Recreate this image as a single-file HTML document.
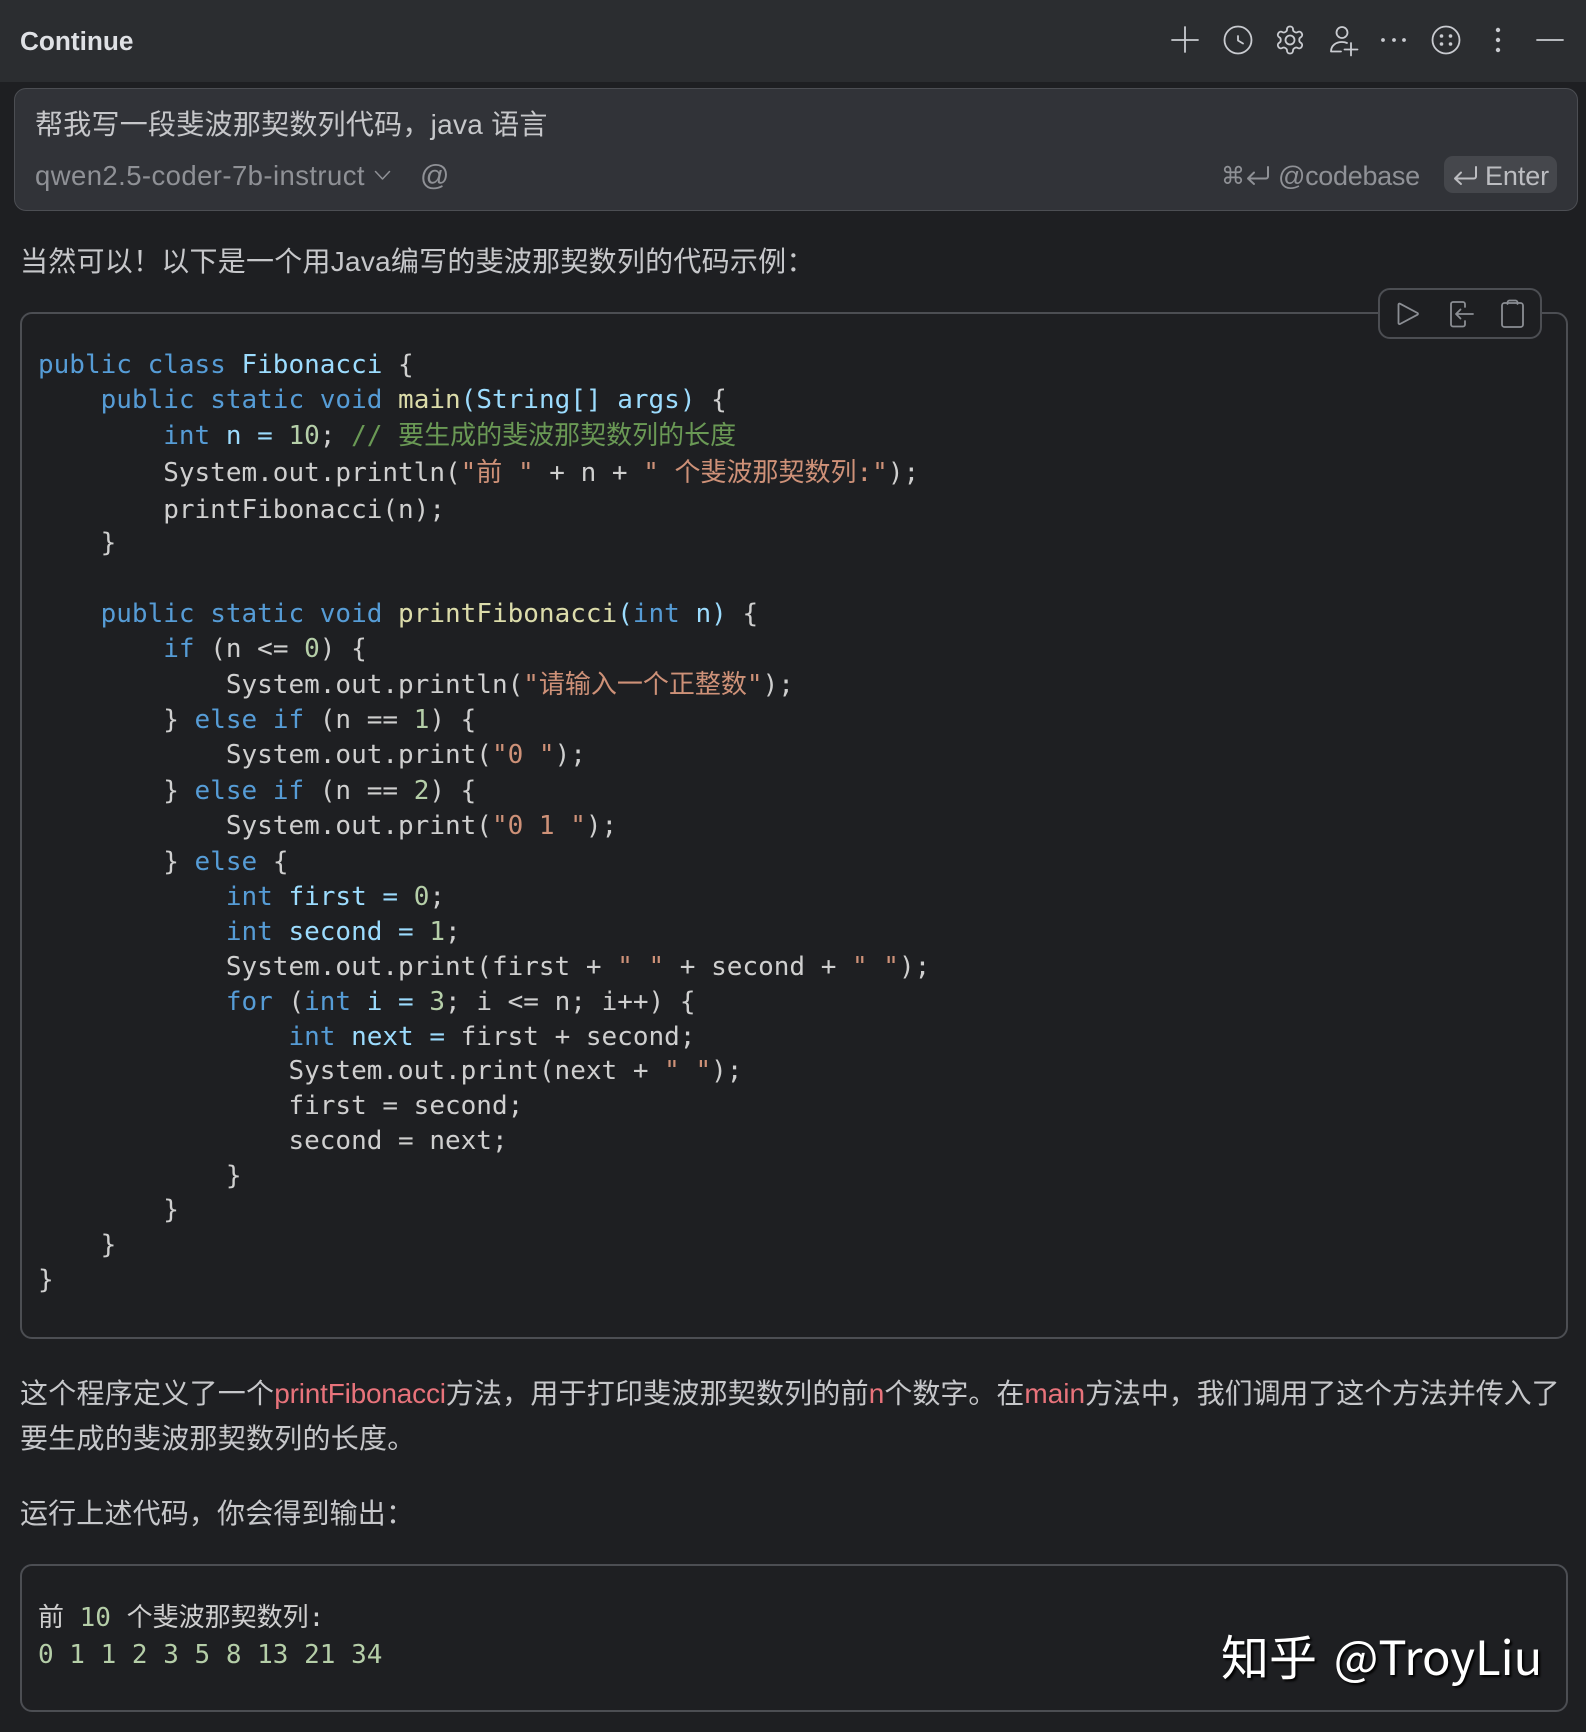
<!DOCTYPE html>
<html lang="zh"><head><meta charset="utf-8"><title>Continue</title>
<style>
html,body{margin:0;padding:0;background:#1e1f22}
#p{position:relative;width:1586px;height:1732px;overflow:hidden;background:#1e1f22;font-family:"Liberation Sans","Noto Sans CJK SC",sans-serif;color:#c6c7ca}
.a{position:absolute;white-space:pre}
.t{position:absolute;white-space:pre;font-size:28px;line-height:36px}
.l{position:absolute;left:38px;white-space:pre;font-family:"DejaVu Sans Mono","Noto Sans CJK SC",monospace;font-size:26px;line-height:36px;color:#cfcfcf}
.k{color:#569cd6}.v{color:#9cdcfe}.f{color:#dcdcaa}.n{color:#b5cea8}.c{color:#6a9955}.s{color:#ce9178}
.r{color:#e8737b}
.box{position:absolute;box-sizing:border-box;border:2px solid #4c4e53;border-radius:12px}
svg{position:absolute;left:0;top:0}
</style></head><body><div id="p">
<div class="a" style="left:0;top:0;width:1586px;height:82px;background:#2b2d30"></div>
<div class="a" style="left:20px;top:23px;font-size:26.2px;line-height:36px;font-weight:bold;color:#dfe1e5">Continue</div>

<div class="a" style="left:14px;top:88px;width:1564px;height:123px;box-sizing:border-box;background:#313338;border:1.5px solid #4c4e53;border-radius:12px"></div>
<div class="t" style="left:35px;top:107px;letter-spacing:.26px">帮我写一段斐波那契数列代码，java 语言</div>
<div class="t" style="left:35px;top:158px;color:#8f9196;font-size:27.5px;letter-spacing:.42px">qwen2.5-coder-7b-instruct</div>
<div class="t" style="left:420px;top:158px;color:#8f9196;font-size:29px;">@</div>
<div class="t" style="left:1221px;top:158px;color:#8f9196;font-size:24px;font-family:'DejaVu Sans',sans-serif">⌘</div>
<div class="t" style="left:1278px;top:158px;color:#8f9196;font-size:27px;letter-spacing:-.3px">@codebase</div>
<div class="a" style="left:1444px;top:156px;width:113px;height:37px;background:#45474c;border-radius:9px"></div>
<div class="t" style="left:1485px;top:158px;color:#bcbdc1;font-size:27px;letter-spacing:-.1px">Enter</div>

<div class="t" style="left:20px;top:244px;letter-spacing:.25px">当然可以！以下是一个用Java编写的斐波那契数列的代码示例：</div>

<div class="box" style="left:20px;top:312px;width:1548px;height:1027px"></div>
<div class="a" style="left:1378px;top:288px;width:164px;height:51px;box-sizing:border-box;background:#1e1f22;border:2px solid #4c4e53;border-radius:12px"></div>

<div class="l" style="top:347px"><span class="k">public class</span> <span class="v">Fibonacci</span> {</div>
<div class="l" style="top:382px">    <span class="k">public static void</span> <span class="f">main</span><span class="v">(String[] args)</span> {</div>
<div class="l" style="top:418px">        <span class="k">int</span> <span class="v">n =</span> <span class="n">10</span>; <span class="c">// 要生成的斐波那契数列的长度</span></div>
<div class="l" style="top:455px">        System.out.println(<span class="s">"前 "</span> + n + <span class="s">" 个斐波那契数列:"</span>);</div>
<div class="l" style="top:492px">        printFibonacci(n);</div>
<div class="l" style="top:525px">    }</div>
<div class="l" style="top:596px">    <span class="k">public static void</span> <span class="f">printFibonacci</span><span class="v">(</span><span class="k">int</span> <span class="v">n)</span> {</div>
<div class="l" style="top:631px">        <span class="k">if</span> (n &lt;= <span class="n">0</span>) {</div>
<div class="l" style="top:667px">            System.out.println(<span class="s">"请输入一个正整数"</span>);</div>
<div class="l" style="top:702px">        } <span class="k">else if</span> (n == <span class="n">1</span>) {</div>
<div class="l" style="top:737px">            System.out.print(<span class="s">"0 "</span>);</div>
<div class="l" style="top:773px">        } <span class="k">else if</span> (n == <span class="n">2</span>) {</div>
<div class="l" style="top:808px">            System.out.print(<span class="s">"0 1 "</span>);</div>
<div class="l" style="top:844px">        } <span class="k">else</span> {</div>
<div class="l" style="top:879px">            <span class="k">int</span> <span class="v">first =</span> <span class="n">0</span>;</div>
<div class="l" style="top:914px">            <span class="k">int</span> <span class="v">second =</span> <span class="n">1</span>;</div>
<div class="l" style="top:949px">            System.out.print(first + <span class="s">" "</span> + second + <span class="s">" "</span>);</div>
<div class="l" style="top:984px">            <span class="k">for</span> (<span class="k">int</span> <span class="v">i =</span> <span class="n">3</span>; i &lt;= n; i++) {</div>
<div class="l" style="top:1019px">                <span class="k">int</span> <span class="v">next =</span> first + second;</div>
<div class="l" style="top:1053px">                System.out.print(next + <span class="s">" "</span>);</div>
<div class="l" style="top:1088px">                first = second;</div>
<div class="l" style="top:1123px">                second = next;</div>
<div class="l" style="top:1158px">            }</div>
<div class="l" style="top:1192px">        }</div>
<div class="l" style="top:1227px">    }</div>
<div class="l" style="top:1262px">}</div>

<div class="t" style="left:20px;top:1376px"><span style="letter-spacing:.25px">这个程序定义了一个</span><span class="r" style="letter-spacing:-.2px">printFibonacci</span><span style="letter-spacing:.2px">方法，用于打印斐波那契数列的前</span><span class="r">n</span>个数字。在<span class="r">main</span><span style="letter-spacing:-.1px">方法中，我们调用了这个方法并传入了</span></div>
<div class="t" style="left:20px;top:1421px;letter-spacing:.25px">要生成的斐波那契数列的长度。</div>
<div class="t" style="left:20px;top:1496px;letter-spacing:.15px">运行上述代码，你会得到输出：</div>

<div class="box" style="left:20px;top:1564px;width:1548px;height:148px"></div>
<div class="l" style="top:1600px">前 <span class="n">10</span> 个斐波那契数列:</div>
<div class="l" style="top:1637px;color:#b5cea8">0 1 1 2 3 5 8 13 21 34</div>

<div class="a" style="left:1221px;top:1622px;font-family:'Noto Sans CJK SC',sans-serif;font-size:48px;line-height:64px;color:#fff;text-shadow:2px 2px 2px #000">知乎 <span style="font-size:47.2px;margin-left:6px">@TroyLiu</span></div>

<svg width="1586" height="1732" viewBox="0 0 1586 1732" fill="none" stroke-linecap="round" stroke-linejoin="round">
<g stroke="#c9cbd0" stroke-width="1.8">
<path d="M1172 40H1198M1185 27V52"/>
<circle cx="1238" cy="40" r="13.5"/><path d="M1238 36V40.5L1243 43.5"/>
<path transform="translate(1273.8,23.8) scale(1.35)" stroke-width="1.33" d="M12.22 2h-.44a2 2 0 0 0-2 2v.18a2 2 0 0 1-1 1.73l-.43.25a2 2 0 0 1-2 0l-.15-.08a2 2 0 0 0-2.73.73l-.22.38a2 2 0 0 0 .73 2.73l.15.1a2 2 0 0 1 1 1.72v.51a2 2 0 0 1-1 1.74l-.15.09a2 2 0 0 0-.73 2.73l.22.38a2 2 0 0 0 2.73.73l.15-.08a2 2 0 0 1 2 0l.43.25a2 2 0 0 1 1 1.73V20a2 2 0 0 0 2 2h.44a2 2 0 0 0 2-2v-.18a2 2 0 0 1 1-1.73l.43-.25a2 2 0 0 1 2 0l.15.08a2 2 0 0 0 2.73-.73l.22-.39a2 2 0 0 0-.73-2.73l-.15-.08a2 2 0 0 1-1-1.74v-.5a2 2 0 0 1 1-1.74l.15-.09a2 2 0 0 0 .73-2.73l-.22-.38a2 2 0 0 0-2.73-.73l-.15.08a2 2 0 0 1-2 0l-.43-.25a2 2 0 0 1-1-1.73V4a2 2 0 0 0-2-2z"/>
<circle cx="1290" cy="40" r="4.5"/>
<circle cx="1342" cy="32.5" r="5.5"/>
<path d="M1331 51.5H1341M1331 51.5c0-6 5-9.5 11-9.5 2 0 3.5.3 5 1M1351 43V55.5M1344.5 49.5H1357.5"/>
<circle cx="1446" cy="40" r="13.5"/>
<path d="M1537 40H1563"/>
</g>
<g fill="#c9cbd0">
<circle cx="1383" cy="40" r="1.9"/><circle cx="1394" cy="40" r="1.9"/><circle cx="1404" cy="40" r="1.9"/>
<circle cx="1441.5" cy="36" r="1.8"/><circle cx="1450.5" cy="36" r="1.8"/><circle cx="1441.5" cy="44" r="1.8"/><circle cx="1450.5" cy="44" r="1.8"/>
<circle cx="1498" cy="30" r="2.2"/><circle cx="1498" cy="40" r="2.2"/><circle cx="1498" cy="50" r="2.2"/>
</g>
<path d="M375.5 171.5L382.5 179L389.5 171.5" stroke="#8f9196" stroke-width="1.5"/>
<path d="M1268 167V176.5a2 2 0 0 1-2 2H1248M1254 172.5L1248 178.5L1254 184" stroke="#8f9196" stroke-width="2"/>
<path d="M1476 167V176.5a2 2 0 0 1-2 2H1455M1461 172.5L1455 178.5L1461 184" stroke="#bcbdc1" stroke-width="2"/>
<g stroke="#8b8e94" stroke-width="1.8">
<path d="M1398.5 304.5a1 1 0 0 1 1.5-.8L1417.5 313a1 1 0 0 1 0 1.7L1400 324a1 1 0 0 1-1.5-.8z"/>
<path d="M1465 307V304a2 2 0 0 0-2-2H1453a2 2 0 0 0-2 2V324.5a2 2 0 0 0 2 2H1463a2 2 0 0 0 2-2V321"/>
<path d="M1473 314H1456M1460.5 309.5L1456 314L1460.5 318.5"/>
<rect x="1502" y="303" width="21" height="24" rx="2.5"/>
<path d="M1507.5 304V302.5a2 2 0 0 1 2-2H1515.5a2 2 0 0 1 2 2V304"/>
</g>
</svg>
</div></body></html>
